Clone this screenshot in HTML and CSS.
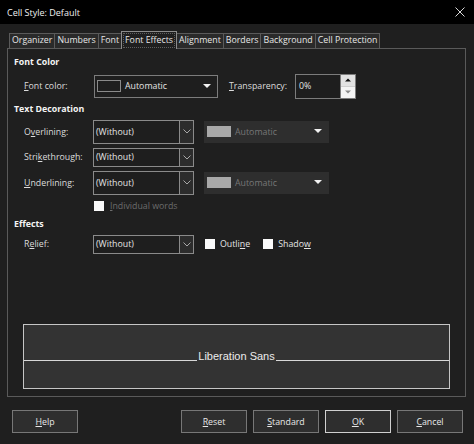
FILE: index.html
```html
<!DOCTYPE html>
<html>
<head>
<meta charset="utf-8">
<link rel="stylesheet" href="styles.css">
</head>
<body>
<div class="titlebar">
  <span class="title">Cell Style: Default</span>
  <svg class="close" width="10" height="10" viewBox="0 0 10 10"><path d="M0.5 0.5L9.5 9.5M9.5 0.5L0.5 9.5" stroke="#d8d8d8" stroke-width="1"/></svg>
</div>
<div class="tabs">
  <div class="tab">Organizer</div>
  <div class="tab">Numbers</div>
  <div class="tab">Font</div>
  <div class="tab active"><span class="focus">Font Effects</span></div>
  <div class="tab">Alignment</div>
  <div class="tab">Borders</div>
  <div class="tab">Background</div>
  <div class="tab">Cell Protection</div>
</div>
<div class="panel">
  <div class="heading h-first">Font Color</div>
  <div class="row row-color">
    <span class="label"><u>F</u>ont color:</span>
    <div class="dropdown">
      <span class="swatch dark"></span>
      <span class="dd-text">Automatic</span>
      <svg class="dd-arrow" width="8" height="5" viewBox="0 0 8 5"><path d="M0 0H8L4 4Z" fill="#f2f2f2"/></svg>
    </div>
    <span class="label-t"><u>T</u>ransparency:</span>
    <div class="spin">
      <span class="spin-text">0%</span>
      <div class="spin-btns">
        <div class="spin-up"><svg width="6" height="4" viewBox="0 0 6 4"><path d="M0 3.5H6L3 0.5Z" fill="#111"/></svg></div>
        <div class="spin-down"><svg width="6" height="4" viewBox="0 0 6 4"><path d="M0 0.5H6L3 3.5Z" fill="#8a8a8a"/></svg></div>
      </div>
    </div>
  </div>
  <div class="heading h-next">Text Decoration</div>
  <div class="row row-combo">
    <span class="label label-c">O<u>v</u>erlining:</span>
    <div class="combo"><span class="combo-text">(Without)</span><span class="combo-btn"><svg width="8" height="5" viewBox="0 0 8 5"><path d="M0.5 0.5L4 4L7.5 0.5" fill="none" stroke="#a8a8a8" stroke-width="1"/></svg></span></div>
    <div class="dropdown disabled">
      <span class="swatch gray"></span>
      <span class="dd-text">Automatic</span>
      <svg class="dd-arrow" width="8" height="5" viewBox="0 0 8 5"><path d="M0 0H8L4 4Z" fill="#f2f2f2"/></svg>
    </div>
  </div>
  <div class="row row-strike">
    <span class="label label-c">Stri<u>k</u>ethrough:</span>
    <div class="combo short"><span class="combo-text">(Without)</span><span class="combo-btn"><svg width="8" height="5" viewBox="0 0 8 5"><path d="M0.5 0.5L4 4L7.5 0.5" fill="none" stroke="#a8a8a8" stroke-width="1"/></svg></span></div>
  </div>
  <div class="row row-combo">
    <span class="label label-c"><u>U</u>nderlining:</span>
    <div class="combo"><span class="combo-text">(Without)</span><span class="combo-btn"><svg width="8" height="5" viewBox="0 0 8 5"><path d="M0.5 0.5L4 4L7.5 0.5" fill="none" stroke="#a8a8a8" stroke-width="1"/></svg></span></div>
    <div class="dropdown disabled">
      <span class="swatch gray"></span>
      <span class="dd-text">Automatic</span>
      <svg class="dd-arrow" width="8" height="5" viewBox="0 0 8 5"><path d="M0 0H8L4 4Z" fill="#f2f2f2"/></svg>
    </div>
  </div>
  <div class="row row-check">
    <span class="check"></span>
    <span class="check-label dim"><u>I</u>ndividual words</span>
  </div>
  <div class="heading h-effects">Effects</div>
  <div class="row row-relief">
    <span class="label label-c">R<u>e</u>lief:</span>
    <div class="combo short"><span class="combo-text">(Without)</span><span class="combo-btn"><svg width="8" height="5" viewBox="0 0 8 5"><path d="M0.5 0.5L4 4L7.5 0.5" fill="none" stroke="#a8a8a8" stroke-width="1"/></svg></span></div>
    <span class="check check-outline"></span>
    <span class="check-label">Outli<u>n</u>e</span>
    <span class="check check-shadow"></span>
    <span class="check-label">Shado<u>w</u></span>
  </div>
  <div class="preview">
    <div class="preview-line"></div>
    <span class="preview-text">Liberation Sans</span>
    <div class="preview-line"></div>
  </div>
</div>
<div class="footer">
  <div class="btn"><u>H</u>elp</div>
  <div class="spacer"></div>
  <div class="btn"><u>R</u>eset</div>
  <div class="btn"><u>S</u>tandard</div>
  <div class="btn default"><u>O</u>K</div>
  <div class="btn"><u>C</u>ancel</div>
</div>
</body>
</html>
```
FILE: styles.css
```css
body {
  margin: 0;
  width: 474px;
  height: 444px;
  overflow: hidden;
  background: #1f1f1f;
  color: #e4e4e4;
  font-family: "Open Sans", "Noto Sans", sans-serif;
  font-size: 8.8px;
}
u { text-decoration: underline; text-underline-offset: 1px; }

.titlebar {
  height: 24px;
  background: #000;
  display: flex;
  align-items: center;
  justify-content: space-between;
  padding: 0 9px 0 7px;
  color: #f0f0f0;
  font-size: 9px;
}

.tabs {
  display: flex;
  align-items: flex-end;
  height: 17px;
  margin: 7px 0 0 9px;
  position: relative;
  z-index: 1;
}
.tab {
  box-sizing: border-box;
  height: 15px;
  line-height: 13px;
  padding: 0 2px;
  border: 1px solid #5a5a5a;
  border-bottom: none;
  background: #2a2a2a;
  margin-right: -1px;
  color: #e6e6e6;
  white-space: nowrap;
}
.tab.active {
  height: 18px;
  margin-bottom: -1px;
  background: #1f1f1f;
  border-color: #8c8c8c;
  padding: 1px 1px 0;
  position: relative;
  z-index: 2;
}
.focus {
  display: block;
  line-height: 13px;
  padding: 0 1px;
  border: 1px dotted #5e5e5e;
}

.panel {
  box-sizing: border-box;
  height: 349px;
  margin: 0 8px 0 7px;
  border: 1px solid #5a5a5a;
  display: flex;
  flex-direction: column;
}

.heading {
  font-weight: bold;
  color: #f4f4f4;
  height: 14px;
  line-height: 14px;
  padding-left: 6px;
}
.h-first { margin-top: 6px; }
.h-next { margin-top: 4px; }
.h-effects { margin-top: 2px; }

.row {
  display: flex;
  align-items: center;
  padding-left: 16px;
}
.row-color { height: 24px; margin-top: 5px; }
.row-combo { height: 23px; margin-top: 4px; }
.row-strike { height: 22px; margin-top: 3px; }
.row-combo + .row-strike + .row-combo { margin-top: 3px; }
.row-check { height: 18px; margin-top: 3px; padding-left: 86px; }
.row-relief { height: 20px; margin-top: 3px; }

.label { width: 70px; color: #dcdcdc; }
.label-c { width: 69px; }
.label-t { margin-left: 11px; width: 66px; color: #dcdcdc; }

.dropdown {
  box-sizing: border-box;
  width: 124px;
  height: 23px;
  border: 1px solid #7c7c7c;
  background: #1e1e1e;
  display: flex;
  align-items: center;
  padding: 0 6px 0 2px;
}
.dropdown.disabled {
  width: 125px;
  height: 22px;
  margin-left: 10px;
  border-color: #2e2e2e;
  background: #2e2e2e;
  padding-left: 2px;
  color: #777;
}
.swatch {
  box-sizing: border-box;
  width: 24px;
  height: 12px;
  flex: none;
}
.swatch.dark { border: 1px solid #8a8a8a; background: #1e1e1e; }
.swatch.gray { background: #a9a9a9; height: 11px; }
.dd-text { margin-left: 4px; flex: 1; }
.dd-arrow { flex: none; }

.spin {
  box-sizing: border-box;
  width: 61px;
  height: 25px;
  border: 1px solid #7c7c7c;
  background: #1e1e1e;
  display: flex;
  align-items: center;
}
.spin-text { flex: 1; padding-left: 3px; }
.spin-btns {
  width: 14px;
  height: 23px;
  display: flex;
  flex-direction: column;
  background: #f2f2f2;
  border-left: 1px solid #7c7c7c;
}
.spin-up, .spin-down {
  flex: 1;
  display: flex;
  align-items: center;
  justify-content: center;
}
.spin-up { background: #e2e2e2; border-bottom: 1px solid #cfcfcf; }
.spin-down { background: #f4f4f4; }

.combo {
  box-sizing: border-box;
  width: 101px;
  height: 24px;
  border: 1px solid #8a8a8a;
  background: #1e1e1e;
  display: flex;
  align-items: stretch;
}
.combo.short { height: 19px; }
.combo-text { flex: 1; display: flex; align-items: center; padding-left: 2px; }
.combo-btn {
  width: 13px;
  border-left: 1px solid #8a8a8a;
  background: #2c2c2c;
  display: flex;
  align-items: center;
  justify-content: center;
}

.check {
  box-sizing: border-box;
  width: 10px;
  height: 10px;
  background: #fafafa;
  flex: none;
}
.check-label { margin-left: 5px; }
.check-label.dim { margin-left: 6px; color: #6c6c6c; }
.check-outline { margin-left: 11px; }
.check-shadow { margin-left: 13px; }

.preview {
  box-sizing: border-box;
  height: 65px;
  margin: auto 15px 7px 15px;
  border: 1px solid #c6c6c6;
  background: #333333;
  display: flex;
  align-items: flex-start;
  padding-top: 35px;
}
.preview-line {
  flex: 1;
  height: 1px;
  background: #d8d8d8;
}
.preview-text {
  font-family: "Liberation Sans", Arial, sans-serif;
  font-size: 11px;
  color: #ececec;
  line-height: 11px;
  margin: -9px 1px 0;
}

.footer {
  display: flex;
  gap: 6px;
  margin-top: 13px;
  padding: 0 11px 0 12px;
}
.spacer { flex: 1; }
.btn {
  box-sizing: border-box;
  width: 66px;
  height: 23px;
  border: 1px solid #777;
  background: #2e2e2e;
  display: flex;
  align-items: center;
  justify-content: center;
  color: #e8e8e8;
}
.btn.default { border-color: #d0d0d0; }
```
